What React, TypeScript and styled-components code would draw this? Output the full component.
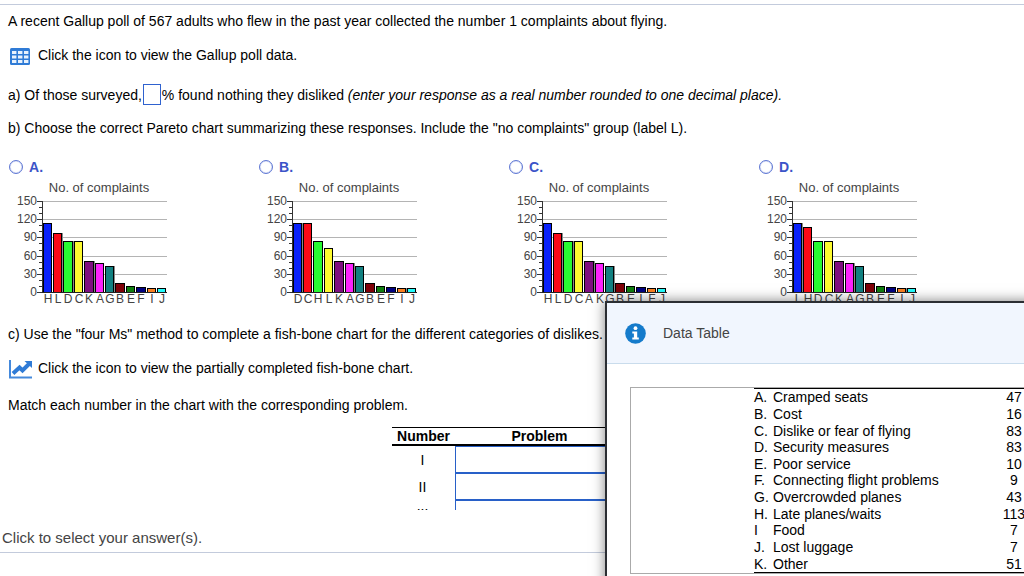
import React, { useState } from "react";
import styled, { createGlobalStyle } from "styled-components";

const GlobalStyle = createGlobalStyle`
  *, *::before, *::after { box-sizing: border-box; }
  html, body { margin: 0; min-height: 100vh; background: #fff; overflow: hidden; }
  body { font: 14px/16px "Liberation Sans", Arial, sans-serif; color: #000; }
`;

const Page = styled.div`
  position: relative;
  min-height: 100vh;
  padding-top: 4px;
  overflow: hidden;
`;

const Exercise = styled.main`
  display: flex;
  flex-direction: column;
  border-top: 1px solid #c3cbdc;
  border-bottom: 1px solid #c3cbdc;
`;

const Question = styled.div`
  display: flex;
  flex-direction: column;
  padding: 8px 16px 0 8px;
`;

const Line = styled.p<{ $gap: number }>`
  display: flex;
  align-items: center;
  margin: 0 0 ${(p) => p.$gap}px;
  white-space: pre;
`;

const IconLink = styled.a<{ $gap: number }>`
  display: flex;
  align-items: center;
  gap: 6px;
  height: 24px;
  margin-bottom: ${(p) => p.$gap}px;
  color: inherit;
  text-decoration: none;
  svg { flex: none; }
`;

const Percent = styled.input`
  width: 18px;
  height: 21px;
  margin: 0 1px;
  padding: 0;
  border: 1px solid #2f62cf;
  background: #fff;
  font: inherit;
  text-align: center;
`;

const Choices = styled.fieldset`
  display: grid;
  grid-template-columns: repeat(4, 1fr);
  margin: 0 0 21px;
  padding: 0;
  border: 0;
`;

const Choice = styled.div`
  min-width: 0;
`;

const ChoiceLabel = styled.label`
  display: flex;
  align-items: center;
  gap: 6px;
  height: 16px;
  color: #3c54c8;
  font-weight: bold;
`;

const Radio = styled.input`
  appearance: none;
  width: 14px;
  height: 14px;
  margin: 0 0 0 1px;
  border: 1px solid #5f78d4;
  border-radius: 50%;
  background: #fff;
  box-shadow: inset 0 0 1px #5f78d4;
  &:checked { box-shadow: inset 0 0 0 3px #fff; background: #3c54c8; }
`;

const Plot = styled.svg`
  display: block;
  overflow: visible;
  font-family: "Liberation Sans", Arial, sans-serif;
  fill: #444;
`;

const MatchArea = styled.div`
  height: 83px;
  overflow: hidden;
`;

const MatchTable = styled.table`
  width: 232px;
  margin: 0 auto;
  border-collapse: separate;
  border-spacing: 0;
  table-layout: fixed;
  border-top: 1px solid #000;
  text-align: center;
  th { height: 18px; padding: 0; border-bottom: 2px solid #000; }
  th:first-child { width: 63px; }
  td { height: 27px; padding: 0; }
  td:first-child { padding-right: 2px; }
`;

const Answer = styled.input`
  display: block;
  width: 100%;
  height: 27px;
  padding: 0 4px;
  border: 1px solid #2860c8;
  background: #fff;
  font: inherit;
`;

const Hint = styled.footer`
  padding: 20px 2px 6px;
  color: #444;
  font-size: 15px;
`;

const Dialog = styled.section`
  position: absolute;
  top: 301px;
  right: -24px;
  bottom: -24px;
  left: 605px;
  border: 2px solid #2b2e33;
  background: #fff;
  box-shadow: 0 0 12px rgba(0, 0, 0, 0.5);
`;

const DialogHeader = styled.header`
  display: flex;
  align-items: center;
  gap: 17px;
  height: 61px;
  padding-left: 18px;
  border-bottom: 1px solid #c9dcec;
  background: #f1f6fe;
`;

const DialogTitle = styled.h2`
  margin: 0;
  color: #444;
  font-size: 14px;
  font-weight: normal;
`;

const DataFrame = styled.div`
  display: flex;
  margin: 23px 0 0 23px;
  padding-left: 123px;
  border: 1px solid #aaa;
`;

const DataTable = styled.table`
  flex: 1;
  height: 185px;
  border-top: 1px solid #000;
  border-bottom: 1px solid #000;
  border-collapse: separate;
  border-spacing: 0;
  td { padding: 0; text-align: left; }
  td:first-child { width: 19px; }
  td:last-child { width: 62px; text-align: center; }
`;

const GridIcon = () => (
  <svg width="24" height="24" viewBox="0 0 24 24" aria-hidden="true">
    <rect x="2" y="5" width="20" height="17" rx="1.5" fill="#2f7bd6" />
    <g fill="#e8f2fd">
      {[8, 12.5, 17].map((y) =>
        [4, 10, 16].map((x) => <rect key={`${x}-${y}`} x={x} y={y} width="4.4" height="3" />)
      )}
    </g>
  </svg>
);

const TrendIcon = () => (
  <svg width="24" height="24" viewBox="0 0 24 24" aria-hidden="true">
    <path d="M2 4V21.5H24" fill="none" stroke="#4489dc" strokeWidth="2" />
    <path d="M5 17.5L11.5 11.5L14.5 14.5L21 8" fill="none" stroke="#2f7bd6" strokeWidth="4" />
    <path d="M16.5 5H24V12Z" fill="#2f7bd6" />
  </svg>
);

const InfoIcon = () => (
  <svg width="21" height="21" viewBox="0 0 21 21" aria-hidden="true">
    <circle cx="10.5" cy="10.5" r="10.3" fill="#157bcb" />
    <circle cx="10.5" cy="5.2" r="1.9" fill="#fff" />
    <path d="M7.3 8.4H12.2V14.4H13.8V16.4H7.3V14.4H8.9V10.4H7.3Z" fill="#fff" />
  </svg>
);

const BAR_COLORS = [
  "#0a22fa", "#fb0a18", "#28fb32", "#fdfb30", "#7f0f80", "#fb22fb",
  "#128080", "#800008", "#108010", "#000080", "#fb8022", "#22fbfb",
];

type ChartSpec = { id: string; order: string; values: number[]; shaded: number[] };

const TAIL = [51, 48, 43, 15, 10, 8, 7, 7];
const CHARTS: ChartSpec[] = [
  { id: "A", order: "HLDCKAGBEFIJ", values: [113, 97, 84, 84, ...TAIL], shaded: [1, 2, 4, 6] },
  { id: "B", order: "DCHLKAGBEFIJ", values: [113, 113, 84, 73, ...TAIL], shaded: [0, 5, 10] },
  { id: "C", order: "HLDCAKGBEIFJ", values: [113, 97, 84, 84, ...TAIL], shaded: [1, 2, 4, 6] },
  { id: "D", order: "LHDCKAGBEFIJ", values: [113, 107, 84, 84, ...TAIL], shaded: [0, 5, 10] },
];

const BASE = 117;
const yOf = (v: number) => BASE - Math.round(v * 0.607);
const barX = (i: number) => Math.round(34.6 + i * 10.4);

function ParetoChart({ order, values, shaded }: ChartSpec) {
  return (
    <Plot width="170" height="130" viewBox="0 0 170 130" role="img" aria-label="No. of complaints">
      <text x="91" y="17" fontSize="13" textAnchor="middle">No. of complaints</text>
      {[30, 60, 90, 120, 150].map((v) => (
        <rect key={v} x="34" y={yOf(v)} width="125" height="1" fill="#b4b4b4" />
      ))}
      {Array.from({ length: 16 }, (_, k) => k * 10).map((v) => (
        <rect key={v} x={v % 30 ? 31 : 29} y={yOf(v)} width={v % 30 ? 3 : 5} height="1" fill="#333" />
      ))}
      <rect x="34" y={yOf(150)} width="1" height={BASE - yOf(150) + 1} fill="#333" />
      {[0, 30, 60, 90, 120, 150].map((v) => (
        <text key={v} x="29" y={yOf(v) + 4} fontSize="12" textAnchor="end">{v}</text>
      ))}
      {values.map((v, i) => {
        const x = barX(i);
        const w = barX(i + 1) - x - 1;
        const y = yOf(v);
        return (
          <g key={i}>
            {shaded.includes(i) && <rect x={x + w} y={y} width="1" height={BASE - y} fill="#8a8a8a" />}
            <rect x={x} y={y} width={w} height={BASE - y + 1} fill="#000" />
            <rect x={x + 1} y={y + 1} width={w - 2} height={BASE - y - 1} fill={BAR_COLORS[i]} />
          </g>
        );
      })}
      <rect x="34" y={BASE} width="125" height="1" fill="#222" />
      {order.split("").map((c, i) => (
        <text key={c} x={barX(i) + 5} y="128" fontSize="12" textAnchor="middle">{c}</text>
      ))}
    </Plot>
  );
}

const COMPLAINTS: [string, string, number][] = [
  ["A.", "Cramped seats", 47],
  ["B.", "Cost", 16],
  ["C.", "Dislike or fear of flying", 83],
  ["D.", "Security measures", 83],
  ["E.", "Poor service", 10],
  ["F.", "Connecting flight problems", 9],
  ["G.", "Overcrowded planes", 43],
  ["H.", "Late planes/waits", 113],
  ["I", "Food", 7],
  ["J.", "Lost luggage", 7],
  ["K.", "Other", 51],
];

export default function App() {
  const [choice, setChoice] = useState("");
  return (
    <Page>
      <GlobalStyle />
      <Exercise>
        <Question>
          <Line $gap={14}>A recent Gallup poll of 567 adults who flew in the past year collected the number 1 complaints about flying.</Line>
          <IconLink href="#poll" $gap={17}>
            <GridIcon />
            <span>Click the icon to view the Gallup poll data.</span>
          </IconLink>
          <Line $gap={15}>
            <label htmlFor="percent">a) Of those surveyed,</label>
            <Percent id="percent" />
            <span>% found nothing they disliked <em>(enter your response as a real number rounded to one decimal place).</em></span>
          </Line>
          <Line $gap={23}>b) Choose the correct Pareto chart summarizing these responses. Include the "no complaints" group (label L).</Line>
          <Choices aria-label="Pareto charts">
            {CHARTS.map((chart) => (
              <Choice key={chart.id}>
                <ChoiceLabel>
                  <Radio type="radio" name="pareto" checked={choice === chart.id} onChange={() => setChoice(chart.id)} />
                  {chart.id}.
                </ChoiceLabel>
                <ParetoChart {...chart} />
              </Choice>
            ))}
          </Choices>
          <Line $gap={14}>c) Use the "four Ms" method to complete a fish-bone chart for the different categories of dislikes.</Line>
          <IconLink href="#fishbone" $gap={17}>
            <TrendIcon />
            <span>Click the icon to view the partially completed fish-bone chart.</span>
          </IconLink>
          <Line $gap={14}>Match each number in the chart with the corresponding problem.</Line>
          <MatchArea>
            <MatchTable>
              <thead>
                <tr><th scope="col">Number</th><th scope="col">Problem</th></tr>
              </thead>
              <tbody>
                {["I", "II", "III"].map((n) => (
                  <tr key={n}>
                    <td>{n}</td>
                    <td><Answer aria-label={`Problem ${n}`} /></td>
                  </tr>
                ))}
              </tbody>
            </MatchTable>
          </MatchArea>
        </Question>
        <Hint>Click to select your answer(s).</Hint>
      </Exercise>
      <Dialog role="dialog" aria-labelledby="dialog-title">
        <DialogHeader>
          <InfoIcon />
          <DialogTitle id="dialog-title">Data Table</DialogTitle>
        </DialogHeader>
        <DataFrame>
          <DataTable>
            <tbody>
              {COMPLAINTS.map(([key, name, count]) => (
                <tr key={key}><td>{key}</td><td>{name}</td><td>{count}</td></tr>
              ))}
            </tbody>
          </DataTable>
        </DataFrame>
      </Dialog>
    </Page>
  );
}
